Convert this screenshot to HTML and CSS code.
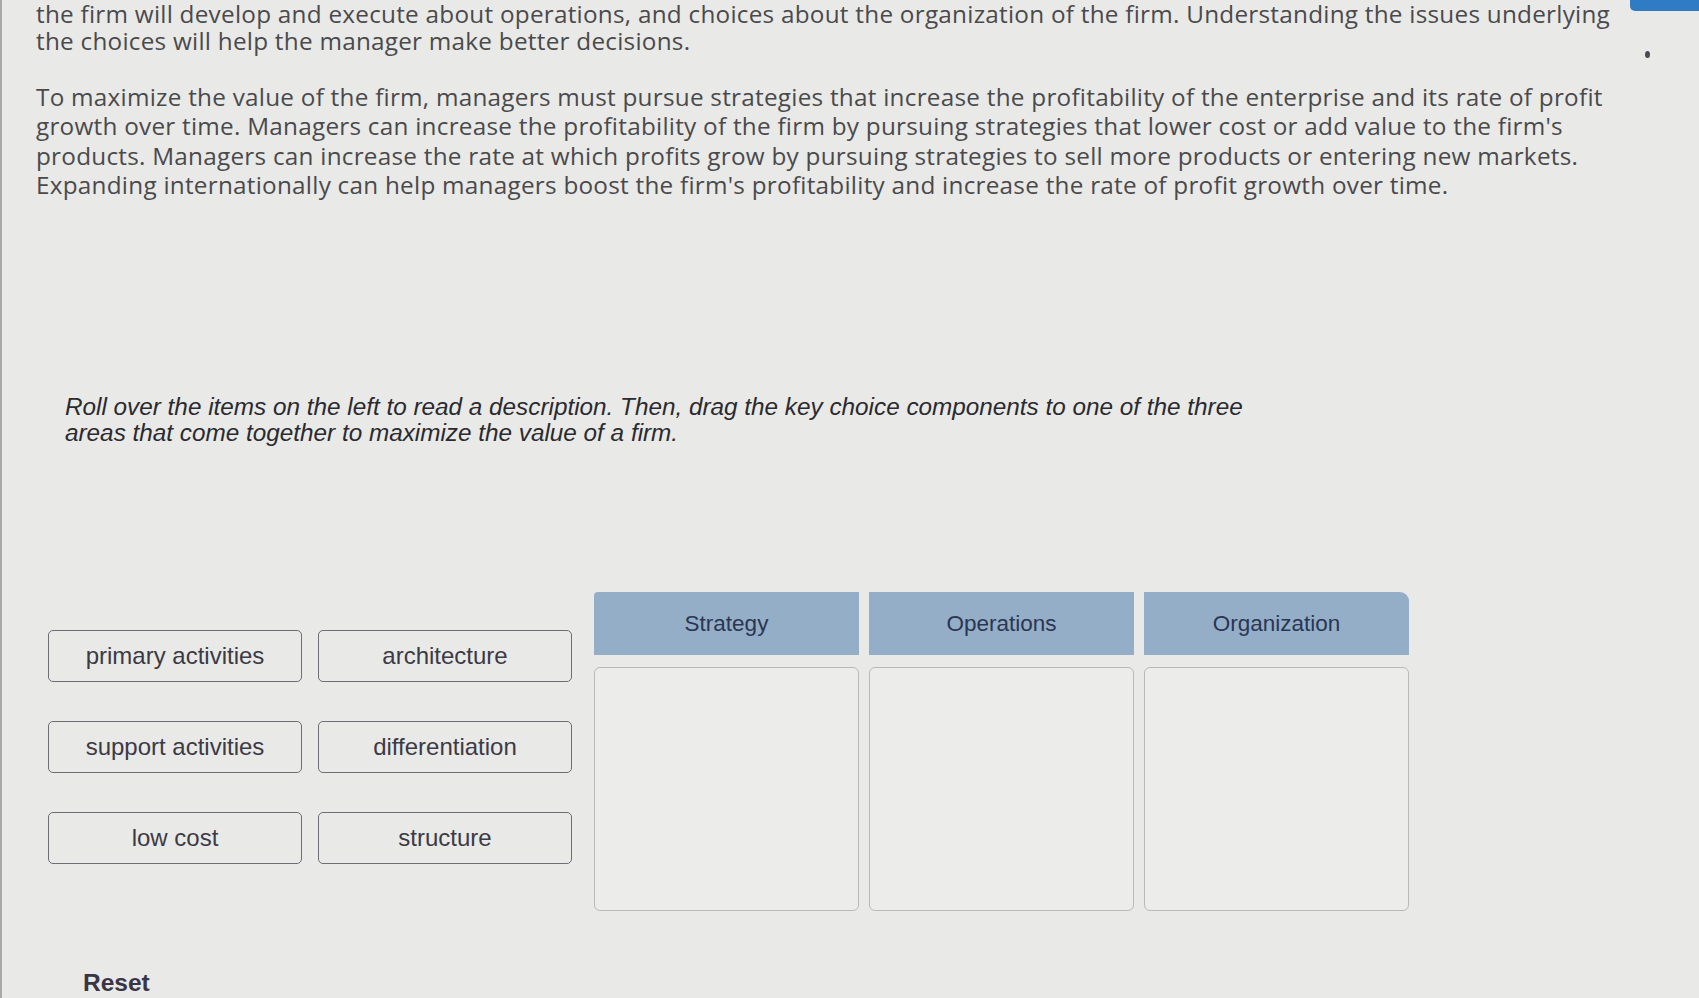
FILE: index.html
```html
<!DOCTYPE html>
<html lang="en">
<head>
<meta charset="utf-8">
<title>Strategy, Operations, Organization</title>
<link rel="stylesheet" href="styles.css">
</head>
<body>
<div class="page">
  <div class="top">
    <p class="intro">the firm will develop and execute about operations, and choices about the organization of the firm. Understanding the issues underlying<br>the choices will help the manager make better decisions.</p>
    <div class="side">
      <div class="corner-btn"></div>
      <div class="dot"></div>
    </div>
  </div>
  <p class="body-text">To maximize the value of the firm, managers must pursue strategies that increase the profitability of the enterprise and its rate of profit<br>growth over time. Managers can increase the profitability of the firm by pursuing strategies that lower cost or add value to the firm's<br>products. Managers can increase the rate at which profits grow by pursuing strategies to sell more products or entering new markets.<br>Expanding internationally can help managers boost the firm's profitability and increase the rate of profit growth over time.</p>

  <p class="instructions">Roll over the items on the left to read a description. Then, drag the key choice components to one of the three<br>areas that come together to maximize the value of a firm.</p>

  <div class="activity">
    <div class="choices">
      <div class="choice">primary activities</div>
      <div class="choice">architecture</div>
      <div class="choice">support activities</div>
      <div class="choice">differentiation</div>
      <div class="choice">low cost</div>
      <div class="choice">structure</div>
    </div>
    <div class="zones">
      <div class="zone">
        <div class="zone-head first">Strategy</div>
        <div class="zone-drop"></div>
      </div>
      <div class="zone">
        <div class="zone-head">Operations</div>
        <div class="zone-drop"></div>
      </div>
      <div class="zone">
        <div class="zone-head last">Organization</div>
        <div class="zone-drop"></div>
      </div>
    </div>
  </div>

  <div class="reset">Reset</div>
</div>
</body>
</html>
```

FILE: styles.css
```css
html, body {
  margin: 0;
  padding: 0;
  background: #e9e9e7;
  overflow: hidden;
}

.page {
  height: 998px;
  border-left: 2px solid #a9a9a9;
  padding-left: 34px;
  box-sizing: border-box;
  font-family: "Open Sans", Lato, sans-serif;
  color: #4a4a4d;
}

.top {
  display: flex;
  align-items: flex-start;
}

.intro {
  flex: 1;
  min-width: 0;
  margin: 0;
  font-size: 24.3px;
  letter-spacing: 0.25px;
  line-height: 27px;
  white-space: nowrap;
}

.side {
  width: 69px;
  flex-shrink: 0;
  display: flex;
  flex-direction: column;
  align-items: flex-start;
}

.corner-btn {
  width: 69px;
  height: 11px;
  background: #2f7bc4;
  border-bottom-left-radius: 5px;
}

.dot {
  width: 5px;
  height: 7px;
  margin: 40px 0 0 15px;
  border-radius: 50%;
  background: #4a4a55;
}

.body-text {
  margin: 24px 0 0 0;
  font-size: 24.3px;
  letter-spacing: 0.25px;
  line-height: 29.3px;
  white-space: nowrap;
}

.instructions {
  margin: 195px 0 0 29px;
  font-family: "Liberation Sans", Arial, sans-serif;
  font-style: italic;
  font-size: 24.3px;
  line-height: 26px;
  color: #2a2a30;
  white-space: nowrap;
}

.activity {
  display: flex;
  align-items: flex-start;
  margin-top: 146px;
}

.choices {
  display: grid;
  grid-template-columns: 254px 254px;
  column-gap: 16px;
  row-gap: 39px;
  margin: 38px 0 0 12px;
}

.choice {
  height: 52px;
  box-sizing: border-box;
  border: 1.5px solid #6e6d73;
  border-radius: 5px;
  display: flex;
  align-items: center;
  justify-content: center;
  font-family: "Liberation Sans", Arial, sans-serif;
  font-size: 24px;
  color: #3c3a45;
}

.zones {
  display: grid;
  grid-template-columns: repeat(3, 265px);
  column-gap: 10px;
  margin-left: 22px;
}

.zone {
  display: flex;
  flex-direction: column;
  gap: 12px;
}

.zone-head {
  height: 63px;
  background: #94aec8;
  display: flex;
  align-items: center;
  justify-content: center;
  font-family: "Liberation Sans", Arial, sans-serif;
  font-size: 22.5px;
  color: #2b3652;
}

.zone-head.first {
  border-top-left-radius: 4px;
}

.zone-head.last {
  border-top-right-radius: 9px;
}

.zone-drop {
  height: 244px;
  box-sizing: border-box;
  border: 1.5px solid #b9b9ba;
  border-radius: 6px;
  background: #ececea;
}

.reset {
  margin: 58px 0 0 47px;
  font-family: "Liberation Sans", Arial, sans-serif;
  font-weight: bold;
  font-size: 24.5px;
  line-height: 28px;
  color: #3a3546;
}
```
